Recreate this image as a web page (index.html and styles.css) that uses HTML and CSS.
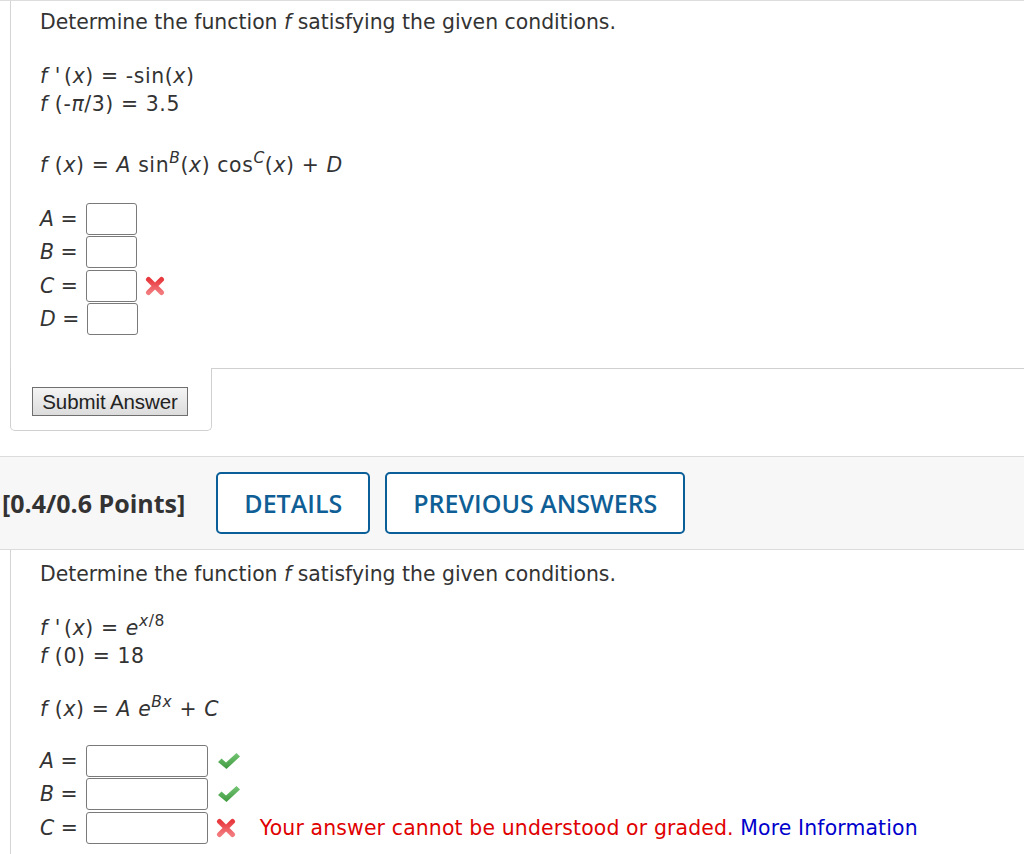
FILE: index.html
```html
<!DOCTYPE html>
<html>
<head>
<meta charset="utf-8">
<link rel="stylesheet" href="styles.css">
</head>
<body>
<div class="q1">
  <div class="q1-body">
    <p class="title">Determine the function <i>f</i> satisfying the given conditions.</p>
    <div class="given">
      <div class="line"><i>f</i> '<span class="gap">(<i>x</i>)</span> = -sin(<i>x</i>)</div>
      <div class="line"><i>f</i> (-<i>π</i>/3) = 3.5</div>
    </div>
    <div class="formula f1"><i>f</i> (<i>x</i>) = <i>A</i> sin<sup><i>B</i></sup>(<i>x</i>) cos<sup><i>C</i></sup>(<i>x</i>) + <i>D</i></div>
    <div class="answers">
      <div class="row"><span class="lbl"><i>A</i> =</span><span class="box"></span></div>
      <div class="row"><span class="lbl"><i>B</i> =</span><span class="box"></span></div>
      <div class="row"><span class="lbl"><i>C</i> =</span><span class="box"></span>
        <svg class="cross" width="20" height="20" viewBox="0 0 20 20"><defs><linearGradient id="rg1" x1="0" y1="0" x2="0" y2="1"><stop offset="0" stop-color="#e8393e"/><stop offset="1" stop-color="#f27a7d"/></linearGradient></defs><path d="M3.5 3.5 L16.5 16.5 M16.5 3.5 L3.5 16.5" stroke="url(#rg1)" stroke-width="5" stroke-linecap="round"/></svg>
      </div>
      <div class="row"><span class="lbl"><i>D</i> =</span><span class="box"></span></div>
    </div>
  </div>
  <div class="q1-foot"><button class="submit">Submit Answer</button></div>
</div>

<div class="band">
  <span class="points">[0.4/0.6 Points]</span>
  <button class="obtn">DETAILS</button>
  <button class="obtn">PREVIOUS ANSWERS</button>
</div>

<div class="q2">
  <p class="title">Determine the function <i>f</i> satisfying the given conditions.</p>
  <div class="given">
    <div class="line"><i>f</i> '<span class="gap">(<i>x</i>)</span> = <i>e</i><sup><i>x</i>/8</sup></div>
    <div class="line"><i>f</i> (0) = 18</div>
  </div>
  <div class="formula f2"><i>f</i> (<i>x</i>) = <i>A</i> <i>e</i><sup><i>Bx</i></sup> + <i>C</i></div>
  <div class="answers a2">
    <div class="row"><span class="lbl"><i>A</i> =</span><span class="box wide"></span>
      <svg class="check" width="24" height="20" viewBox="0 0 24 20"><defs><linearGradient id="gg1" x1="0" y1="0" x2="0" y2="1"><stop offset="0" stop-color="#74c574"/><stop offset="1" stop-color="#3f9a3f"/></linearGradient></defs><path d="M1 11 L4.5 7.5 L9 11.5 L19.5 2 L23 5.5 L9.5 18 Z" fill="url(#gg1)"/></svg>
    </div>
    <div class="row"><span class="lbl"><i>B</i> =</span><span class="box wide"></span>
      <svg class="check" width="24" height="20" viewBox="0 0 24 20"><defs><linearGradient id="gg2" x1="0" y1="0" x2="0" y2="1"><stop offset="0" stop-color="#74c574"/><stop offset="1" stop-color="#3f9a3f"/></linearGradient></defs><path d="M1 11 L4.5 7.5 L9 11.5 L19.5 2 L23 5.5 L9.5 18 Z" fill="url(#gg2)"/></svg>
    </div>
    <div class="row"><span class="lbl"><i>C</i> =</span><span class="box wide"></span>
      <svg class="cross" width="20" height="20" viewBox="0 0 20 20"><defs><linearGradient id="rg2" x1="0" y1="0" x2="0" y2="1"><stop offset="0" stop-color="#e8393e"/><stop offset="1" stop-color="#f27a7d"/></linearGradient></defs><path d="M3.5 3.5 L16.5 16.5 M16.5 3.5 L3.5 16.5" stroke="url(#rg2)" stroke-width="5" stroke-linecap="round"/></svg>
      <span class="err">Your answer cannot be understood or graded. <a class="more" href="#">More Information</a></span>
    </div>
  </div>
</div>
</body>
</html>
```

FILE: styles.css
```css
html, body {
  margin: 0;
  padding: 0;
  background: #fff;
}
body {
  font-family: "DejaVu Sans", Verdana, sans-serif;
  font-size: 20.4px;
  line-height: 28px;
  color: #333;
  width: 1024px;
  overflow: hidden;
}
i { font-style: italic; }
.gap { margin-left: 3px; }
sup {
  font-size: 15.5px;
  line-height: 0;
  vertical-align: 9px;
}
.line, .formula {
  letter-spacing: 0.6px;
}
.q1 {
  border-top: 1px solid #ddd;
}
.q1-body {
  margin-left: 10px;
  border-left: 1px solid #d4d4d4;
  border-bottom: 1px solid #d0d0d0;
  padding: 7px 0 0 29px;
  height: 368px;
  box-sizing: border-box;
}
.title {
  margin: 0;
}
.given {
  margin-top: 26px;
}
.formula.f1 { margin-top: 33px; }
.formula.f2 { margin-top: 25px; }
.answers {
  margin-top: 23px;
}
.answers.a2 { margin-top: 21px; }
.row {
  display: flex;
  align-items: center;
  height: 33.5px;
}
.lbl {
  white-space: pre;
  margin-right: 8px;
}
.box {
  display: inline-block;
  width: 51px;
  height: 32px;
  box-sizing: border-box;
  border: 1.5px solid #7a7a7a;
  border-radius: 3px;
  background: #fff;
}
.box.wide { width: 122px; }
.cross {
  margin-left: 8px;
  flex: none;
}
.check {
  margin-left: 9px;
  flex: none;
}
.q1-foot {
  margin-left: 10px;
  margin-top: -1px;
  width: 202px;
  height: 63px;
  box-sizing: border-box;
  border: 1px solid #d0d0d0;
  border-top: none;
  border-radius: 0 0 5px 5px;
  background: #fff;
  padding: 19px 0 0 21px;
}
.submit {
  display: block;
  width: 156px;
  height: 29px;
  box-sizing: border-box;
  margin: 0;
  padding: 0;
  font-family: "Liberation Sans", Arial, sans-serif;
  font-size: 20.5px;
  letter-spacing: -0.1px;
  color: #222;
  border: 1px solid #6f6f6f;
  border-radius: 0;
  background: linear-gradient(#f4f4f4, #dcdcdc);
}
.band {
  margin-top: 25px;
  height: 94px;
  box-sizing: border-box;
  border-top: 1px solid #dcdcdc;
  border-bottom: 1px solid #dcdcdc;
  background: #f7f7f7;
  display: flex;
  align-items: center;
  padding-left: 2px;
}
.points {
  font-family: "Open Sans", sans-serif;
  font-weight: 700;
  font-size: 25px;
  color: #333;
  margin-right: 31px;
}
.obtn {
  height: 62px;
  box-sizing: border-box;
  border: 2px solid #0b5f98;
  border-radius: 5px;
  background: #fff;
  color: #0f5f96;
  font-family: "Open Sans", sans-serif;
  font-weight: 600;
  font-size: 25px;
  padding: 0 26px;
  margin: 0 15px 0 0;
}
.q2 {
  margin-left: 10px;
  border-left: 1px solid #d4d4d4;
  padding: 10px 0 30px 29px;
}
.err {
  color: #e00000;
  margin-left: 24px;
  letter-spacing: 0.15px;
  white-space: nowrap;
}
.more {
  color: #0000cc;
  text-decoration: none;
}
```
